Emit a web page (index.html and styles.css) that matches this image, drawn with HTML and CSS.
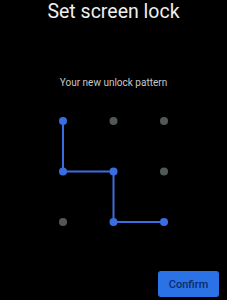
FILE: index.html
```html
<!DOCTYPE html>
<html lang="en">
<head>
  <meta charset="UTF-8">
  <meta name="viewport" content="width=device-width, initial-scale=1.0">
  <title>Set screen lock</title>
  <link rel="stylesheet" href="styles.css">
</head>
<body>
  <div class="screen">
    <h1 class="title">Set screen lock</h1>
    <p class="hint">Your new unlock pattern</p>

    <div class="pattern">
      <svg width="121" height="121" viewBox="0 0 121 121">
        <!-- drawn path: top-left, mid-left, center, bottom-center, bottom-right -->
        <polyline points="10,10 10,60.5 60.5,60.5 60.5,111 111,111"
                  fill="none" stroke="#3a6de0" stroke-width="2" />
        <circle cx="10" cy="10" r="4" fill="#3a6de0" />
        <circle cx="60.5" cy="10" r="4" fill="#525858" />
        <circle cx="111" cy="10" r="4" fill="#525858" />
        <circle cx="10" cy="60.5" r="4" fill="#3a6de0" />
        <circle cx="60.5" cy="60.5" r="4" fill="#3a6de0" />
        <circle cx="111" cy="60.5" r="4" fill="#525858" />
        <circle cx="10" cy="111" r="4" fill="#525858" />
        <circle cx="60.5" cy="111" r="4" fill="#3a6de0" />
        <circle cx="111" cy="111" r="4" fill="#3a6de0" />
      </svg>
    </div>

    <div class="actions">
      <button class="confirm-btn">Confirm</button>
    </div>
  </div>
</body>
</html>
```

FILE: styles.css
```css
body {
  margin: 0;
  padding: 0;
  background: #000;
  color: #fff;
  font-family: Roboto, 'Noto Sans', sans-serif;
  width: 227px;
  height: 300px;
  overflow: hidden;
}

.screen {
  display: flex;
  flex-direction: column;
  align-items: center;
  height: 300px;
}

.title {
  font-size: 19.5px;
  font-weight: 400;
  line-height: 23px;
  margin: 0;
  color: #eee;
}

.hint {
  font-size: 10px;
  line-height: 12px;
  margin: 54px 0 0;
  color: #c8c8c8;
}

.pattern {
  margin-top: 22px;
  margin-left: -1px;
  line-height: 0;
}

.actions {
  align-self: stretch;
  display: flex;
  justify-content: flex-end;
  margin-top: auto;
  padding: 0 8px 3px 0;
}

.confirm-btn {
  background: #2a72e6;
  color: #0f2c68;
  border: none;
  border-radius: 3px;
  width: 61px;
  height: 26px;
  padding: 0;
  font-family: Roboto, sans-serif;
  font-size: 11px;
  font-weight: 500;
}
```
